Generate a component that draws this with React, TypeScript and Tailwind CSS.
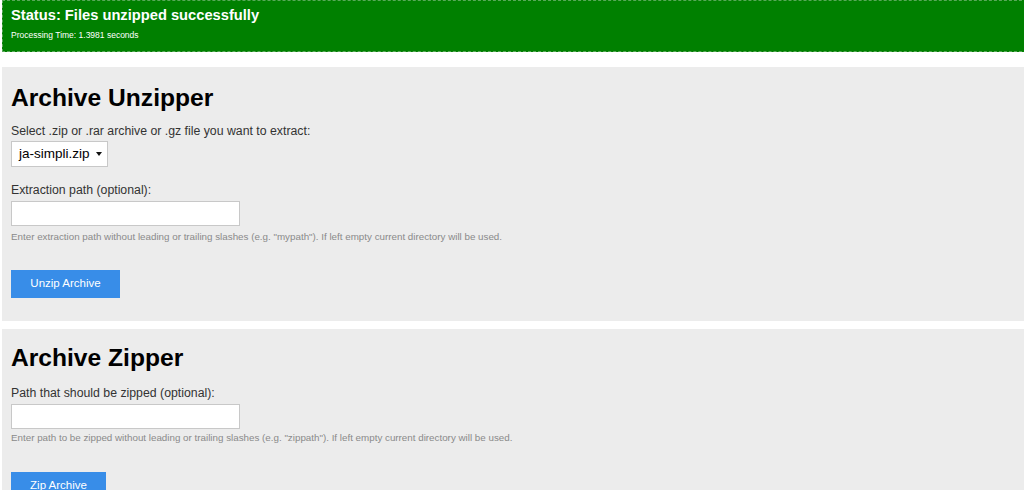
import React from "react";

const font = { fontFamily: '"Liberation Sans", Arial, sans-serif' };

function Hint({ children }: { children: React.ReactNode }) {
  return <div className="text-[9.8px] leading-[11px] text-[#8a8a8a] whitespace-nowrap">{children}</div>;
}

function Label({ children }: { children: React.ReactNode }) {
  return <div className="text-[12.3px] leading-[14px] text-[#333] whitespace-nowrap">{children}</div>;
}

function TextInput() {
  return <div className="w-[229px] h-[25px] bg-white border border-[#c8c8c8]" />;
}

export default function App() {
  return (
    <div className="h-[490px] w-[1024px] overflow-hidden bg-white" style={font}>
      <div className="w-[1040px] ml-[2px]">
        <div className="bg-[#008000] border border-dashed border-[#5aa85a] pl-[8px] pt-[5px] pb-[11px] text-white">
          <div className="text-[14.7px] leading-[18px] font-bold whitespace-nowrap">Status: Files unzipped successfully</div>
          <div className="mt-[6px] text-[8.5px] leading-[10px] whitespace-nowrap">Processing Time: 1.3981 seconds</div>
        </div>

        <div className="mt-[15px] bg-[#ececec] pl-[9px] pt-[19px] pb-[23px]">
          <h1 className="text-[24.6px] leading-[24px] font-bold text-black whitespace-nowrap">Archive Unzipper</h1>
          <div className="mt-[14px]"><Label>Select .zip or .rar archive or .gz file you want to extract:</Label></div>
          <div className="mt-[3px] w-[97px] h-[26px] bg-white border border-[#c8c8c8] flex items-center pl-[7px] pr-[5px] justify-between">
            <span className="text-[13.5px] text-black whitespace-nowrap">ja-simpli.zip</span>
            <svg width="6" height="4" viewBox="0 0 6 4"><path d="M0 0 L6 0 L3 4 Z" fill="#111" /></svg>
          </div>
          <div className="mt-[16px]"><Label>Extraction path (optional):</Label></div>
          <div className="mt-[4px]"><TextInput /></div>
          <div className="mt-[5px]"><Hint>Enter extraction path without leading or trailing slashes (e.g. "mypath"). If left empty current directory will be used.</Hint></div>
          <div className="mt-[28px] w-[109px] h-[28px] bg-[#388de8] text-white text-[11.5px] flex items-center justify-center whitespace-nowrap">Unzip Archive</div>
        </div>

        <div className="mt-[8px] bg-[#ececec] pl-[9px] pt-[17px] pb-[23px]">
          <h1 className="text-[24.6px] leading-[24px] font-bold text-black whitespace-nowrap">Archive Zipper</h1>
          <div className="mt-[16px]"><Label>Path that should be zipped (optional):</Label></div>
          <div className="mt-[4px]"><TextInput /></div>
          <div className="mt-[3px]"><Hint>Enter path to be zipped without leading or trailing slashes (e.g. "zippath"). If left empty current directory will be used.</Hint></div>
          <div className="mt-[29px] w-[95px] h-[28px] bg-[#388de8] text-white text-[11.5px] flex items-center justify-center whitespace-nowrap">Zip Archive</div>
        </div>
      </div>
    </div>
  );
}
